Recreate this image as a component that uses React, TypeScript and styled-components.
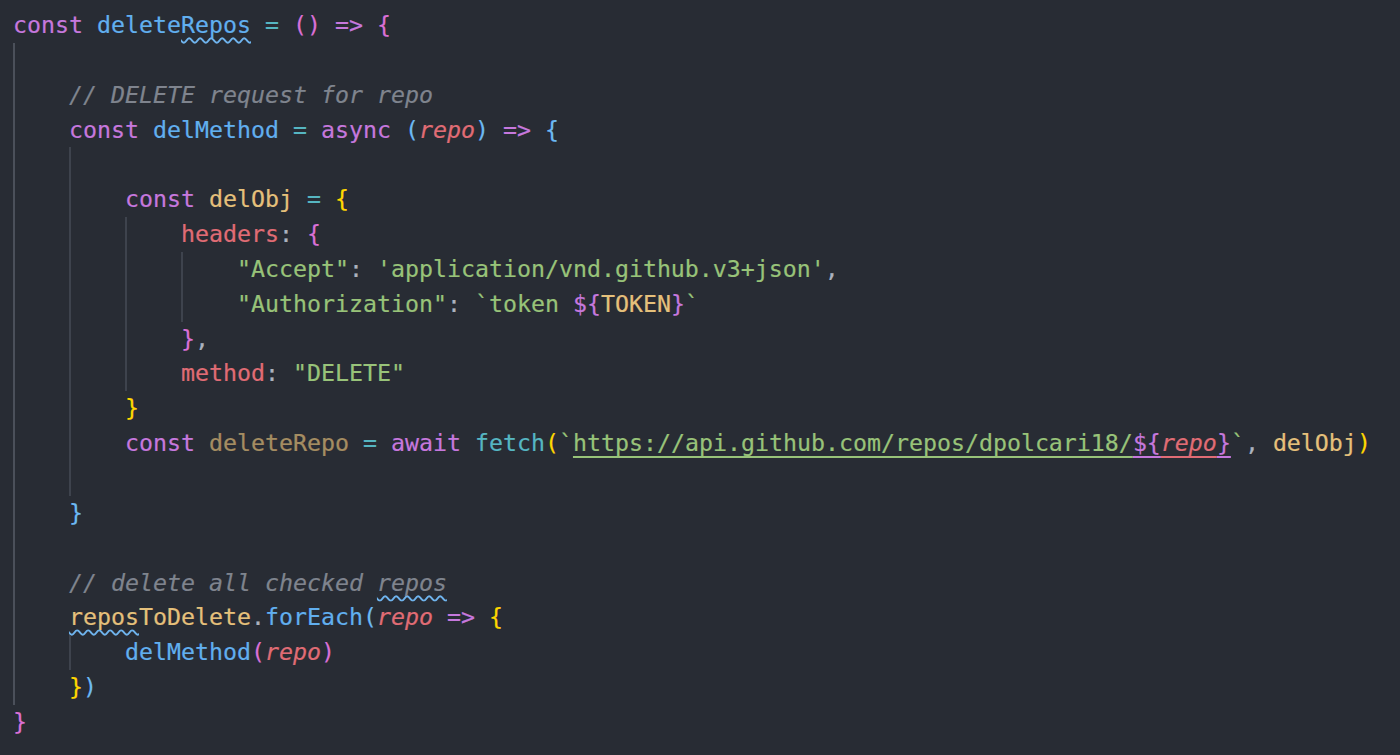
import React from "react";
import styled, { createGlobalStyle, css } from "styled-components";

const GlobalStyle = createGlobalStyle`
  html, body { margin: 0; padding: 0; background: #282c34; }
  body { overflow: hidden; }
`;

const Editor = styled.div`
  box-sizing: border-box;
  width: 1400px;
  height: 755px;
  background: #282c34;
  padding: 8px 0 0 13px;
  font-family: "DejaVu Sans Mono", "Liberation Mono", monospace;
  font-size: 23.26px;
  color: #abb2bf;
  -webkit-text-stroke: 0.2px currentColor;
`;

const Line = styled.div`
  display: flex;
  align-items: stretch;
  height: 34.85px;
  line-height: 34.85px;
  white-space: pre;
`;

const Indent = styled.span<{ $active?: boolean }>`
  flex: none;
  width: 4ch;
  box-shadow: inset 2px 0 0 ${(p) => (p.$active ? "#4b505a" : "#3e434d")};
`;

const Code = styled.span`
  white-space: pre;
`;

const Keyword = styled.span`color: #c678dd;`;
const Fn = styled.span`color: #61afef;`;
const Call = styled.span`color: #56b6c2;`;
const Op = styled.span`color: #56b6c2;`;
const Arrow = styled.span`color: #c678dd;`;
const Param = styled.span`color: #e06c75; font-style: italic;`;
const Prop = styled.span`color: #e06c75;`;
const Str = styled.span`color: #98c379;`;
const Tpl = styled.span`color: #c678dd;`;
const Var = styled.span<{ $unused?: boolean }>`
  color: #e5c07b;
  ${(p) => p.$unused && css`opacity: 0.66;`}
`;
const Punc = styled.span`color: #abb2bf;`;
const Comment = styled.span`color: #7f848e; font-style: italic;`;

const bracketColors = ["#da70d6", "#6db9f3", "#ffd700"];
const Br = styled.span<{ $l: number }>`
  color: ${(p) => bracketColors[(p.$l - 1) % 3]};
`;

const Squiggle = styled.span`
  text-decoration: underline wavy #6fb4ee;
  text-decoration-thickness: 1.5px;
  text-underline-offset: 4px;
  text-decoration-skip-ink: none;
`;

const Link = styled.span`
  & > span {
    text-decoration: underline;
    text-decoration-thickness: 2px;
    text-underline-offset: 5px;
    text-decoration-skip-ink: none;
  }
`;

type RowProps = { depth: number; children?: React.ReactNode };

const Row = ({ depth, children }: RowProps) => (
  <Line>
    {Array.from({ length: depth }).map((_, i) => (
      <Indent key={i} $active={i === 0} />
    ))}
    <Code>{children}</Code>
  </Line>
);

export default function App() {
  return (
    <>
      <GlobalStyle />
      <Editor>
        <Row depth={0}>
          <Keyword>const</Keyword> <Fn>delete<Squiggle>Repos</Squiggle></Fn> <Op>=</Op>{" "}
          <Br $l={1}>()</Br> <Arrow>=&gt;</Arrow> <Br $l={1}>{"{"}</Br>
        </Row>
        <Row depth={1} />
        <Row depth={1}>
          <Comment>// DELETE request for repo</Comment>
        </Row>
        <Row depth={1}>
          <Keyword>const</Keyword> <Fn>delMethod</Fn> <Op>=</Op> <Keyword>async</Keyword>{" "}
          <Br $l={2}>(</Br>
          <Param>repo</Param>
          <Br $l={2}>)</Br> <Arrow>=&gt;</Arrow> <Br $l={2}>{"{"}</Br>
        </Row>
        <Row depth={2} />
        <Row depth={2}>
          <Keyword>const</Keyword> <Var>delObj</Var> <Op>=</Op> <Br $l={3}>{"{"}</Br>
        </Row>
        <Row depth={3}>
          <Prop>headers</Prop>
          <Punc>:</Punc> <Br $l={4}>{"{"}</Br>
        </Row>
        <Row depth={4}>
          <Str>"Accept"</Str>
          <Punc>:</Punc> <Str>'application/vnd.github.v3+json'</Str>
          <Punc>,</Punc>
        </Row>
        <Row depth={4}>
          <Str>"Authorization"</Str>
          <Punc>:</Punc> <Str>`token </Str>
          <Tpl>{"${"}</Tpl>
          <Var>TOKEN</Var>
          <Tpl>{"}"}</Tpl>
          <Str>`</Str>
        </Row>
        <Row depth={3}>
          <Br $l={4}>{"}"}</Br>
          <Punc>,</Punc>
        </Row>
        <Row depth={3}>
          <Prop>method</Prop>
          <Punc>:</Punc> <Str>"DELETE"</Str>
        </Row>
        <Row depth={2}>
          <Br $l={3}>{"}"}</Br>
        </Row>
        <Row depth={2}>
          <Keyword>const</Keyword> <Var $unused>deleteRepo</Var> <Op>=</Op> <Keyword>await</Keyword>{" "}
          <Call>fetch</Call>
          <Br $l={3}>(</Br>
          <Str>`</Str>
          <Link>
            <Str>https://api.github.com/repos/dpolcari18/</Str>
            <Tpl>{"${"}</Tpl>
            <Param>repo</Param>
            <Tpl>{"}"}</Tpl>
          </Link>
          <Str>`</Str>
          <Punc>,</Punc> <Var>delObj</Var>
          <Br $l={3}>)</Br>
        </Row>
        <Row depth={2} />
        <Row depth={1}>
          <Br $l={2}>{"}"}</Br>
        </Row>
        <Row depth={1} />
        <Row depth={1}>
          <Comment>
            // delete all checked <Squiggle>repos</Squiggle>
          </Comment>
        </Row>
        <Row depth={1}>
          <Var>
            <Squiggle>repos</Squiggle>ToDelete
          </Var>
          <Punc>.</Punc>
          <Fn>forEach</Fn>
          <Br $l={2}>(</Br>
          <Param>repo</Param> <Arrow>=&gt;</Arrow> <Br $l={3}>{"{"}</Br>
        </Row>
        <Row depth={2}>
          <Fn>delMethod</Fn>
          <Br $l={4}>(</Br>
          <Param>repo</Param>
          <Br $l={4}>)</Br>
        </Row>
        <Row depth={1}>
          <Br $l={3}>{"}"}</Br>
          <Br $l={2}>)</Br>
        </Row>
        <Row depth={0}>
          <Br $l={1}>{"}"}</Br>
        </Row>
      </Editor>
    </>
  );
}
